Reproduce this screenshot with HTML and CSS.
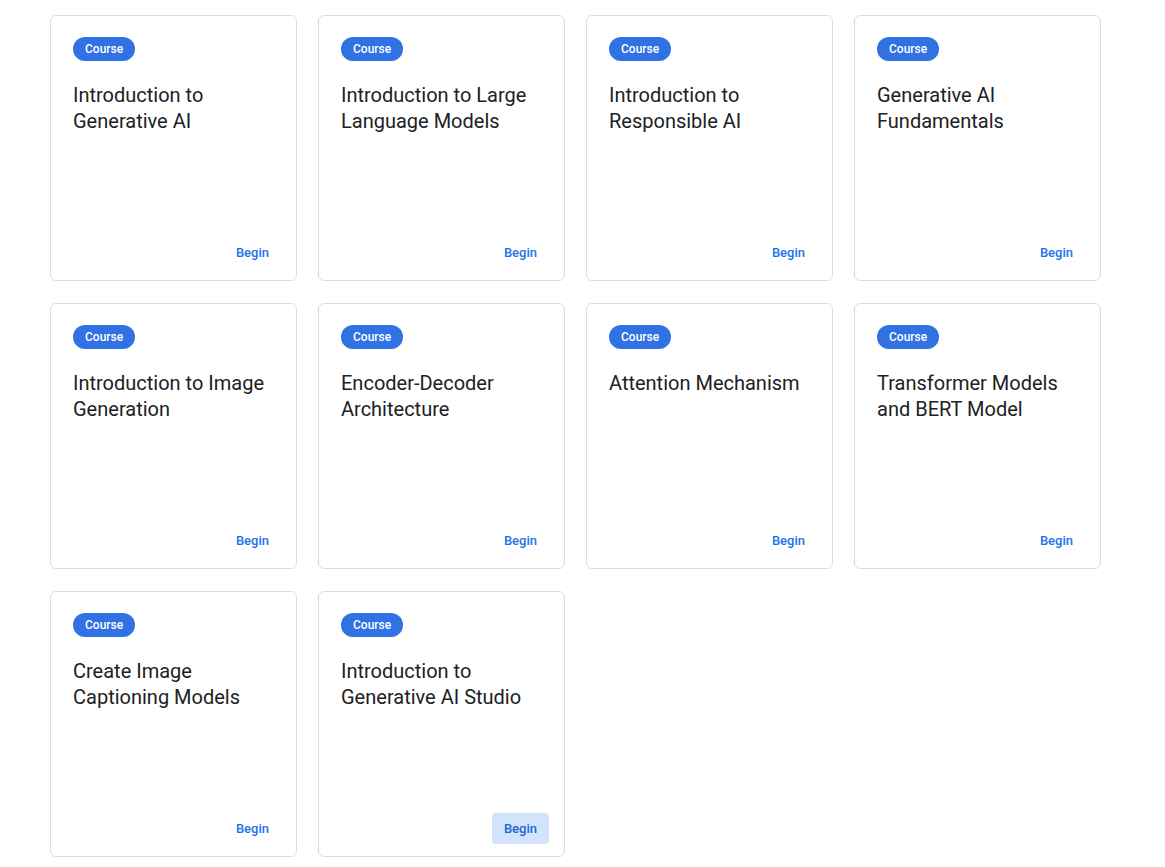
FILE: index.html
```html
<!DOCTYPE html>
<html lang="en">
<head>
  <meta charset="UTF-8">
  <meta name="viewport" content="width=device-width, initial-scale=1.0">
  <title>Generative AI Courses</title>
  <link rel="stylesheet" href="styles.css">
</head>
<body>
  <!--COURSE GRID-->
  <div class="course-grid">
    <div class="course-card">
      <span class="badge">Course</span>
      <h2 class="course-title">Introduction to Generative AI</h2>
      <div class="card-footer"><button class="begin-button">Begin</button></div>
    </div>
    <div class="course-card">
      <span class="badge">Course</span>
      <h2 class="course-title">Introduction to Large Language Models</h2>
      <div class="card-footer"><button class="begin-button">Begin</button></div>
    </div>
    <div class="course-card">
      <span class="badge">Course</span>
      <h2 class="course-title">Introduction to Responsible AI</h2>
      <div class="card-footer"><button class="begin-button">Begin</button></div>
    </div>
    <div class="course-card">
      <span class="badge">Course</span>
      <h2 class="course-title">Generative AI Fundamentals</h2>
      <div class="card-footer"><button class="begin-button">Begin</button></div>
    </div>
    <div class="course-card">
      <span class="badge">Course</span>
      <h2 class="course-title">Introduction to Image Generation</h2>
      <div class="card-footer"><button class="begin-button">Begin</button></div>
    </div>
    <div class="course-card">
      <span class="badge">Course</span>
      <h2 class="course-title">Encoder-Decoder Architecture</h2>
      <div class="card-footer"><button class="begin-button">Begin</button></div>
    </div>
    <div class="course-card">
      <span class="badge">Course</span>
      <h2 class="course-title">Attention Mechanism</h2>
      <div class="card-footer"><button class="begin-button">Begin</button></div>
    </div>
    <div class="course-card">
      <span class="badge">Course</span>
      <h2 class="course-title">Transformer Models and BERT Model</h2>
      <div class="card-footer"><button class="begin-button">Begin</button></div>
    </div>
    <div class="course-card">
      <span class="badge">Course</span>
      <h2 class="course-title">Create Image Captioning Models</h2>
      <div class="card-footer"><button class="begin-button">Begin</button></div>
    </div>
    <div class="course-card">
      <span class="badge">Course</span>
      <h2 class="course-title">Introduction to Generative AI Studio</h2>
      <div class="card-footer"><button class="begin-button hovered">Begin</button></div>
    </div>
  </div>
</body>
</html>
```

FILE: styles.css
```css
body {
  background-color: white;
  margin: 0;
  font-family: Roboto, 'Noto Sans', sans-serif;
  color: #202124;
}
.course-grid {
  display: grid;
  grid-template-columns: repeat(4, 247px);
  grid-auto-rows: 266px;
  column-gap: 21px;
  row-gap: 22px;
  padding: 15px 0 0 50px;
}
.course-card {
  box-sizing: border-box;
  border: 1px solid #dadce0;
  border-radius: 6px;
  padding: 21px 15px 12px 22px;
  display: flex;
  flex-direction: column;
  align-items: flex-start;
}
.badge {
  background-color: #3071e4;
  color: white;
  font-size: 12px;
  font-weight: 500;
  height: 24px;
  line-height: 24px;
  padding: 0 12px;
  border-radius: 12px;
}
.course-title {
  font-size: 20px;
  font-weight: 400;
  line-height: 26px;
  margin: 21px 8px 0 0;
}
.card-footer {
  margin-top: auto;
  align-self: stretch;
  display: flex;
  justify-content: flex-end;
}
.begin-button {
  font-family: Roboto, 'Noto Sans', sans-serif;
  font-size: 13px;
  font-weight: 500;
  color: #1a73e8;
  background: none;
  border: none;
  border-radius: 4px;
  height: 31px;
  padding: 0 12px;
  cursor: pointer;
}
.begin-button.hovered {
  background-color: #d2e3fc;
  color: #1967d2;
}
```
